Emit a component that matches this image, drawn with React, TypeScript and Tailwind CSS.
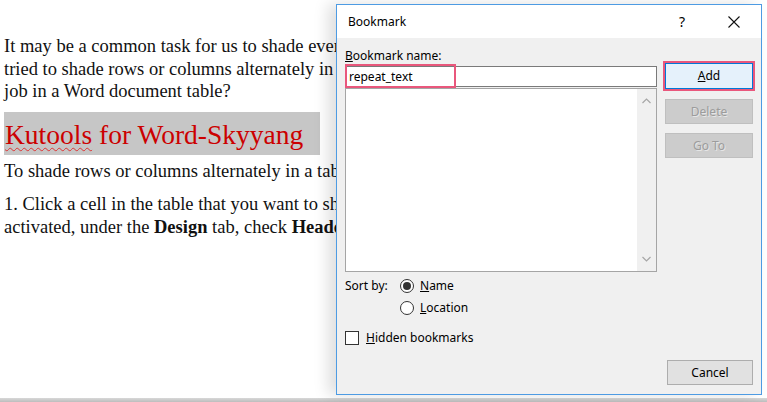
import React from 'react';

function Radio({ checked }: { checked?: boolean }) {
  return (
    <span className="w-[14px] h-[14px] rounded-full border border-[#333] bg-white flex items-center justify-center shrink-0">
      {checked && <span className="w-[8px] h-[8px] rounded-full bg-[#333]" />}
    </span>
  );
}

function Chevron({ up }: { up?: boolean }) {
  return (
    <svg width="9" height="6" viewBox="0 0 9 6" className="block">
      <path
        d={up ? 'M0.5 5 L4.5 1 L8.5 5' : 'M0.5 1 L4.5 5 L8.5 1'}
        fill="none"
        stroke="#a6a6a6"
        strokeWidth="1.2"
      />
    </svg>
  );
}

function DisabledButton({ label }: { label: string }) {
  return (
    <div className="h-[25px] border border-[#bfbfbf] bg-[#cccccc] flex items-center justify-center text-[#9c9c9c] [text-shadow:1px_1px_0_#e6e6e6]">
      {label}
    </div>
  );
}

function BookmarkDialog() {
  return (
    <div className="absolute left-[336px] top-[4px] w-[426px] h-[391px] border border-[#4d9be3] bg-[#f0f0f0] flex flex-col shadow-[-8px_0_14px_rgba(0,0,0,0.13)] font-['Noto_Sans',sans-serif] text-[12px] text-black">
      <div className="h-[33px] bg-white flex items-center pl-[11px] shrink-0">
        <span className="flex-1">Bookmark</span>
        <span className="w-[30px] text-center text-[14px] mr-[31px]">?</span>
        <svg width="12" height="12" viewBox="0 0 12 12" className="mr-[21px]">
          <path d="M0.5 0.5 L11.5 11.5 M11.5 0.5 L0.5 11.5" stroke="#111" strokeWidth="1.1" />
        </svg>
      </div>

      <div className="flex-1 flex pl-[8px] pr-[8px]">
        <div className="w-[312px] flex flex-col pt-[9px]">
          <div className="h-[18px] leading-[18px]">
            <u>B</u>ookmark name:
          </div>
          <div className="relative mt-[1px] h-[21px] border border-[#7a7a7a] bg-white flex items-center pl-[3px]">
            repeat_text
            <div className="absolute left-[-1px] top-[-3px] w-[111px] h-[24px] border-2 border-[#e9577c]" />
          </div>
          <div className="h-[184px] mt-[1px] border border-[#a5a5a5] bg-white flex">
            <div className="flex-1" />
            <div className="w-[19px] bg-[#f0f0f0] flex flex-col items-center justify-between py-[9px]">
              <Chevron up />
              <Chevron />
            </div>
          </div>
          <div className="mt-[5px] flex">
            <span className="w-[55px] leading-[18px]">Sort by:</span>
            <div className="flex flex-col gap-[4px]">
              <div className="flex items-center gap-[6px] h-[18px]">
                <Radio checked />
                <span>
                  <u>N</u>ame
                </span>
              </div>
              <div className="flex items-center gap-[6px] h-[18px]">
                <Radio />
                <span>
                  <u>L</u>ocation
                </span>
              </div>
            </div>
          </div>
          <div className="mt-[12px] flex items-center gap-[7px] h-[18px]">
            <span className="w-[14px] h-[14px] border border-[#333] bg-white" />
            <span>
              <u>H</u>idden bookmarks
            </span>
          </div>
        </div>

        <div className="ml-[8px] w-[88px] flex flex-col pt-[23px] pb-[9px]">
          <div className="border-2 border-[#e9577c] -mx-[2px]">
            <div className="h-[26px] border border-[#0078d7] bg-[#e5f1fb] flex items-center justify-center">
              <span>
                <u>A</u>dd
              </span>
            </div>
          </div>
          <div className="mt-[8px]">
            <DisabledButton label="Delete" />
          </div>
          <div className="mt-[9px]">
            <DisabledButton label="Go To" />
          </div>
          <div className="mt-auto ml-[2px] h-[25px] border border-[#adadad] bg-[#e1e1e1] flex items-center justify-center">
            Cancel
          </div>
        </div>
      </div>
    </div>
  );
}

export default function App() {
  return (
    <div className="relative w-[767px] h-[402px] overflow-hidden bg-white">
      <div className="h-[398px] w-[337px] overflow-hidden pt-[35px] pl-[4px] font-['Liberation_Serif',serif] text-[18.5px] leading-[22.7px] text-[#111]">
        <p className="whitespace-nowrap">It may be a common task for us to shade every other row</p>
        <p className="whitespace-nowrap">tried to shade rows or columns alternately in a table?</p>
        <p className="whitespace-nowrap">job in a Word document table?</p>

        <div className="mt-[9px] w-[316px] h-[43px] bg-[#c6c6c6] flex items-center pl-[1px]">
          <span className="text-[27.5px] leading-none text-[#cc0000] whitespace-nowrap pt-[2px]">
            <span className="underline decoration-wavy decoration-[#d33] decoration-1 underline-offset-[3px]">
              Kutools
            </span>{' '}
            for Word-Skyyang
          </span>
        </div>

        <p className="mt-[5px] whitespace-nowrap">To shade rows or columns alternately in a table, you</p>
        <p className="mt-[10px] whitespace-nowrap">1. Click a cell in the table that you want to shade,</p>
        <p className="whitespace-nowrap">
          activated, under the <b>Design</b> tab, check <b>Header Row</b>
        </p>
      </div>
      <div className="h-[4px] bg-gradient-to-b from-[#d8d8d8] to-[#bdbdbd]" />

      <BookmarkDialog />
    </div>
  );
}
